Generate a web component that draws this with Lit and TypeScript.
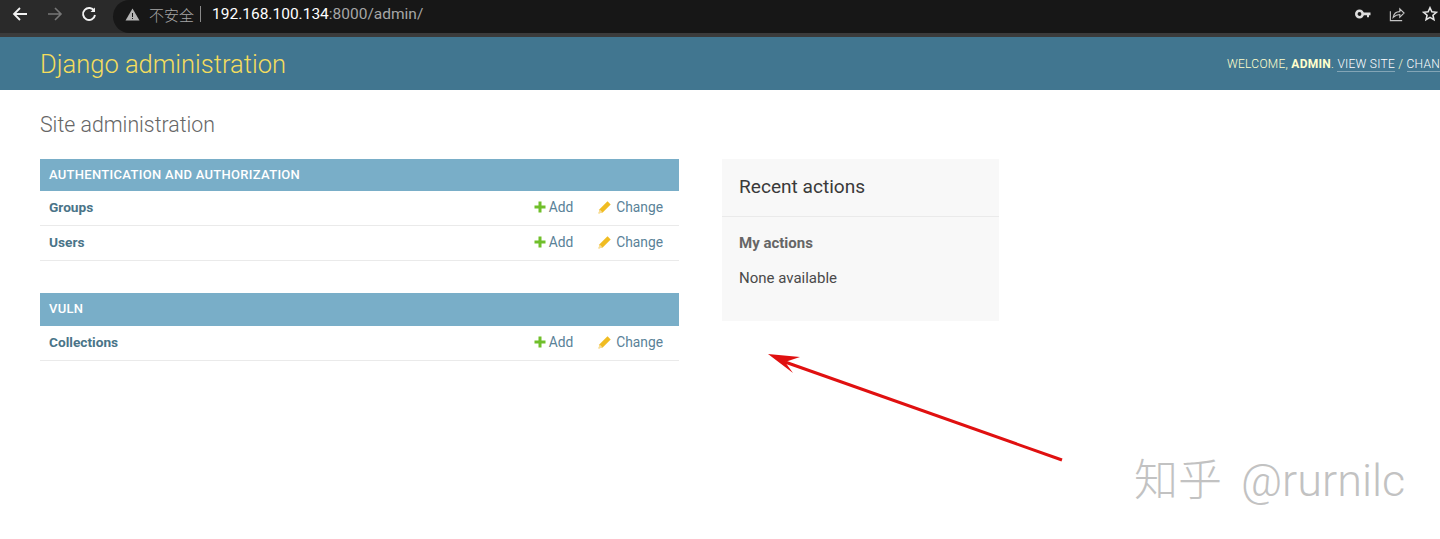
import { LitElement, html, css, svg } from "lit";
import { customElement } from "lit/decorators.js";

const modules = [
  { name: "AUTHENTICATION AND AUTHORIZATION", rows: ["Groups", "Users"] },
  { name: "VULN", rows: ["Collections"] },
];

const plus = html`<svg class="ico" width="12" height="12" viewBox="0 0 12 12"><path d="M4.500 .5h3v4h4v3h-4v4h-3v-4h-4v-3h4z" fill="#70bf2b"/></svg>`;
const pencil = html`<svg class="ico" width="13" height="13" viewBox="0 0 13 13"><path d="M9.500 .3l3.200 3.200-8 8L.5 12.500l1-4.200z" fill="#f0bc22"/><path d="M.5 12.500l1-4.200 3.200 3.200z" fill="#f8dc95"/></svg>`;

@customElement("app-root")
export class AppRoot extends LitElement {
  static styles = css`
    :host {
      display: block;
      position: relative;
      height: 539px;
      overflow: hidden;
      background: #fff;
      font-family: Roboto, "Liberation Sans", sans-serif;
      font-size: 14px;
      color: #333;
    }
    .chrome {
      display: flex;
      align-items: center;
      height: 33px;
      background: #2a2a2a;
      border-bottom: 4px solid #3b3b3b;
    }
    .nav {
      display: flex;
      align-items: center;
      gap: 16.500px;
      padding: 0 0 5px 11px;
      width: 101px;
      box-sizing: border-box;
      margin-right: 12px;
    }
    .nav svg {
      display: block;
    }
    .omni {
      flex: 1;
      display: flex;
      align-items: center;
      height: 33px;
      box-sizing: border-box;
      padding: 0 0 5px 12px;
      background: #171717;
      border-radius: 17px 0 0 17px;
      color: #a6a6a6;
      font-size: 15.500px;
    }
    .warn {
      margin-right: 9px;
    }
    .zh {
      font-family: Roboto, "Noto Sans CJK SC", sans-serif;
      font-size: 15px;
      font-weight: 300;
    }
    .sep {
      width: 1px;
      height: 16px;
      background: #8a8a8a;
      margin: 0 11px 0 6px;
    }
    .host {
      color: #fff;
    }
    .tools {
      margin-left: auto;
      display: flex;
      align-items: center;
      gap: 17px;
      padding-right: 2px;
    }
    .tools svg {
      display: block;
    }
    .header {
      display: flex;
      align-items: center;
      justify-content: space-between;
      height: 53px;
      padding-left: 40px;
      background: #417690;
      white-space: nowrap;
    }
    .brand {
      font-size: 25.500px;
      font-weight: 300;
      color: #f5dd5d;
    }
    .user {
      font-size: 12px;
      font-weight: 300;
      letter-spacing: 0.27px;
      color: #ffc;
    }
    .user strong {
      font-weight: 700;
    }
    .user a {
      color: #fff;
      text-decoration: none;
      border-bottom: 1px solid rgba(255, 255, 255, 0.35);
    }
    .content {
      padding: 21px 40px 0;
    }
    h1 {
      margin: 0 0 20px;
      height: 28px;
      line-height: 28px;
      font-size: 21.300px;
      font-weight: 300;
      color: #666;
    }
    .columns {
      display: flex;
      align-items: flex-start;
      gap: 43px;
    }
    .main {
      width: 639px;
    }
    .module {
      margin-bottom: 32px;
    }
    .caption {
      height: 32px;
      line-height: 32px;
      padding: 0 9px;
      background: #79aec8;
      color: #fff;
      font-size: 13px;
      font-weight: 500;
      letter-spacing: 0.3px;
    }
    .module + .module .caption {
      height: 33px;
    }
    .row {
      display: flex;
      align-items: center;
      height: 32px;
      padding: 0 16px 2px 9px;
      border-bottom: 1px solid #eaeaea;
      font-size: 13.800px;
      color: #5a8298;
    }
    .row b {
      flex: 1;
      font-weight: 700;
      font-size: 13.700px;
      color: #4a7488;
    }
    .act {
      display: flex;
      align-items: center;
      gap: 3px;
    }
    .act.add {
      margin-right: 25px;
    }
    .act.change {
      gap: 5px;
    }
    .ico {
      display: block;
    }
    .recent {
      width: 277px;
      height: 162px;
      box-sizing: border-box;
      background: #f8f8f8;
    }
    .recent h2 {
      margin: 0;
      height: 58px;
      line-height: 56px;
      padding: 0 17px;
      box-sizing: border-box;
      border-bottom: 1px solid #eaeaea;
      font-size: 19.100px;
      font-weight: 400;
      color: #3a3a3a;
    }
    .recent h3 {
      margin: 17px 17px 0;
      line-height: 18px;
      font-size: 15px;
      font-weight: 700;
      color: #666;
    }
    .recent p {
      margin: 17px 17px 0;
      line-height: 18px;
      font-size: 15px;
      color: #4a4a4a;
    }
    .arrow {
      position: absolute;
      left: 0;
      top: 0;
      pointer-events: none;
    }
    .mark {
      position: absolute;
      left: 1134px;
      top: 451px;
      font-size: 45px;
      line-height: 52px;
      font-weight: 300;
      color: #c2c2c2;
      white-space: nowrap;
    }
    .mark span {
      font-family: "Noto Sans CJK SC", sans-serif;
      font-size: 44px;
      margin-right: 19px;
    }
  `;

  render() {
    return html`
      <div class="chrome">
        <div class="nav">
          <svg width="18" height="18" viewBox="0 0 18 18" fill="none" stroke="#f2f2f2" stroke-width="1.800"><path d="M16 9H3M9 3L3 9l6 6"/></svg>
          <svg width="18" height="18" viewBox="0 0 18 18" fill="none" stroke="#777" stroke-width="1.600"><path d="M2 9h13M9 3l6 6-6 6"/></svg>
          <svg width="18" height="18" viewBox="0 0 18 18" fill="none" stroke="#f2f2f2" stroke-width="1.900"><path d="M14.300 6A6 6 0 1 0 15 10"/><path d="M15 2.500V7h-4.500z" fill="#f2f2f2" stroke="none"/></svg>
        </div>
        <div class="omni">
          <svg class="warn" width="15" height="13" viewBox="0 0 15 13"><path d="M7.500 .5l7 12H.5z" fill="#b5b5b5"/><path d="M7 5h1v4H7zM7 10h1v1H7z" fill="#171717"/></svg>
          <span class="zh">不安全</span>
          <span class="sep"></span>
          <span class="host">192.168.100.134</span><span>:8000/admin/</span>
          <div class="tools">
            <svg width="16" height="12" viewBox="0 0 16 12"><circle cx="4.500" cy="6" r="3.200" fill="none" stroke="#ddd" stroke-width="2.600"/><path d="M7.500 4.500H15.500v2.800H14v2h-2v-2H7.500z" fill="#ddd"/></svg>
            <svg width="17" height="18" viewBox="0 0 18 18" fill="none" stroke="#c4c4c4" stroke-width="1.200"><path d="M2.500 6v10h12.500M5.500 12.500c.7-4 3.500-6 7-6V3.500L17 8l-4.500 4.300V9.500c-3 0-5 1-7 3z"/></svg>
            <svg width="16" height="16" viewBox="0 0 18 18" fill="none" stroke="#e4e4e4" stroke-width="1.800"><path d="M9 2l2.100 4.600 5 .5-3.800 3.300 1.100 4.900L9 12.800l-4.400 2.500 1.100-4.900L1.900 7.100l5-.5z"/></svg>
          </div>
        </div>
      </div>
      <div class="header">
        <div class="brand">Django administration</div>
        <div class="user">WELCOME, <strong>ADMIN</strong>. <a>VIEW SITE</a> / <a>CHAN</a></div>
      </div>
      <div class="content">
        <h1>Site administration</h1>
        <div class="columns">
          <div class="main">
            ${modules.map(
              (m) => html`<div class="module">
                <div class="caption">${m.name}</div>
                ${m.rows.map(
                  (r) => html`<div class="row">
                    <b>${r}</b>
                    <span class="act add">${plus}Add</span>
                    <span class="act change">${pencil}Change</span>
                  </div>`
                )}
              </div>`
            )}
          </div>
          <div class="recent">
            <h2>Recent actions</h2>
            <h3>My actions</h3>
            <p>None available</p>
          </div>
        </div>
      </div>
      <svg class="arrow" width="1440" height="539">
        ${svg`<path d="M1062 460L785 362" stroke="#e01010" stroke-width="3" fill="none"/>
        <path d="M768 354L800 357L785 362L793 373z" fill="#e01010"/>`}
      </svg>
      <div class="mark"><span>知乎</span>@rurnilc</div>
    `;
  }
}
